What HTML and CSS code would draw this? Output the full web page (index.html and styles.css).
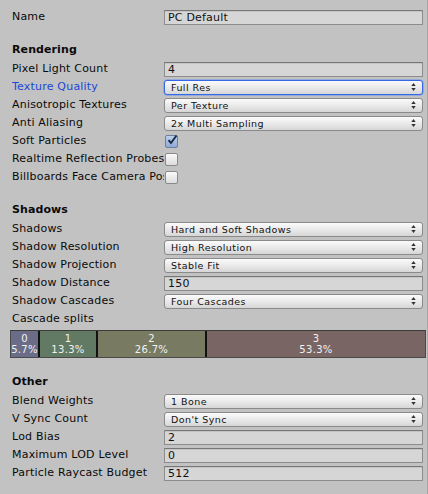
FILE: index.html
```html
<!DOCTYPE html>
<html>
<head>
<meta charset="utf-8">
<link rel="stylesheet" href="styles.css">
</head>
<body>
<div class="inspector">
  <div class="row">
    <div class="label">Name</div>
    <div class="field">PC Default</div>
  </div>

  <div class="header">Rendering</div>
  <div class="row"><div class="label">Pixel Light Count</div><div class="field">4</div></div>
  <div class="row"><div class="label focus-label">Texture Quality</div><div class="popup focused"><span>Full Res</span><svg class="arr" viewBox="0 0 5 9"><path d="M2.5 0L5 3.5H0Z M2.5 9L5 5.5H0Z"/></svg></div></div>
  <div class="row"><div class="label">Anisotropic Textures</div><div class="popup"><span>Per Texture</span><svg class="arr" viewBox="0 0 5 9"><path d="M2.5 0L5 3.5H0Z M2.5 9L5 5.5H0Z"/></svg></div></div>
  <div class="row"><div class="label">Anti Aliasing</div><div class="popup"><span>2x Multi Sampling</span><svg class="arr" viewBox="0 0 5 9"><path d="M2.5 0L5 3.5H0Z M2.5 9L5 5.5H0Z"/></svg></div></div>
  <div class="row"><div class="label">Soft Particles</div><div class="check on"><svg viewBox="0 0 12 12"><path d="M2.5 6.2L5 9L10.5 1.5" fill="none" stroke="#1d2b44" stroke-width="2"/></svg></div></div>
  <div class="row"><div class="label">Realtime Reflection Probes</div><div class="check"></div></div>
  <div class="row"><div class="label">Billboards Face Camera Position</div><div class="check"></div></div>

  <div class="header">Shadows</div>
  <div class="row"><div class="label">Shadows</div><div class="popup"><span>Hard and Soft Shadows</span><svg class="arr" viewBox="0 0 5 9"><path d="M2.5 0L5 3.5H0Z M2.5 9L5 5.5H0Z"/></svg></div></div>
  <div class="row"><div class="label">Shadow Resolution</div><div class="popup"><span>High Resolution</span><svg class="arr" viewBox="0 0 5 9"><path d="M2.5 0L5 3.5H0Z M2.5 9L5 5.5H0Z"/></svg></div></div>
  <div class="row"><div class="label">Shadow Projection</div><div class="popup"><span>Stable Fit</span><svg class="arr" viewBox="0 0 5 9"><path d="M2.5 0L5 3.5H0Z M2.5 9L5 5.5H0Z"/></svg></div></div>
  <div class="row"><div class="label">Shadow Distance</div><div class="field">150</div></div>
  <div class="row"><div class="label">Shadow Cascades</div><div class="popup"><span>Four Cascades</span><svg class="arr" viewBox="0 0 5 9"><path d="M2.5 0L5 3.5H0Z M2.5 9L5 5.5H0Z"/></svg></div></div>
  <div class="row"><div class="label">Cascade splits</div></div>
  <div class="cascades">
    <div class="seg c0"><span>0</span><span>5.7%</span></div>
    <div class="seg c1"><span>1</span><span>13.3%</span></div>
    <div class="seg c2"><span>2</span><span>26.7%</span></div>
    <div class="seg c3"><span>3</span><span>53.3%</span></div>
  </div>

  <div class="header other">Other</div>
  <div class="row"><div class="label">Blend Weights</div><div class="popup"><span>1 Bone</span><svg class="arr" viewBox="0 0 5 9"><path d="M2.5 0L5 3.5H0Z M2.5 9L5 5.5H0Z"/></svg></div></div>
  <div class="row"><div class="label">V Sync Count</div><div class="popup"><span>Don't Sync</span><svg class="arr" viewBox="0 0 5 9"><path d="M2.5 0L5 3.5H0Z M2.5 9L5 5.5H0Z"/></svg></div></div>
  <div class="row"><div class="label">Lod Bias</div><div class="field">2</div></div>
  <div class="row"><div class="label">Maximum LOD Level</div><div class="field">0</div></div>
  <div class="row"><div class="label">Particle Raycast Budget</div><div class="field">512</div></div>
</div>
</body>
</html>
```

FILE: styles.css
```css
html, body {
  margin: 0;
  padding: 0;
  background: #c2c2c2;
}
body {
  width: 428px;
  height: 494px;
  overflow: hidden;
  font-family: "DejaVu Sans", Verdana, sans-serif;
  font-size: 11px;
  color: #0a0a0a;
}
.inspector {
  display: flex;
  flex-direction: column;
  padding: 9px 4px 0 12px;
  border-right: 1px solid #a8a8a8;
  height: 485px;
  width: 411px;
}
.row {
  display: grid;
  grid-template-columns: 152px 1fr;
  height: 16px;
  margin-bottom: 2px;
  align-items: center;
  flex: none;
}
.label {
  white-space: nowrap;
  overflow: hidden;
  line-height: 16px;
  height: 16px;
  letter-spacing: 0.2px;
}
.focus-label {
  color: #1848d8;
}
.header {
  font-weight: bold;
  height: 17px;
  line-height: 16px;
  margin-top: 14px;
  margin-bottom: 2px;
  letter-spacing: 0.1px;
  flex: none;
}
.row + .header {
  margin-top: 15px;
}
.field {
  height: 13px;
  line-height: 13px;
  border: 1px solid #8c8c8c;
  border-top-color: #777;
  background: #d6d6d6;
  padding: 0 3px;
  box-shadow: inset 0 1px 0 #c4c4c4;
  color: #111;
  letter-spacing: 0.2px;
}
.popup {
  height: 13px;
  border: 1px solid #8a8a8a;
  border-radius: 3px;
  background: linear-gradient(#fbfbfb, #e6e6e6 60%, #d6d6d6);
  display: flex;
  align-items: center;
  justify-content: space-between;
  padding: 0 6px 0 6px;
  font-size: 9.5px;
  letter-spacing: 0.45px;
  color: #111;
}
.popup.focused {
  border-color: #3568e6;
  box-shadow: 0 0 0 0.5px #6a90ef;
}
.arr {
  width: 5px;
  height: 8px;
  fill: #333;
  flex: none;
}
.check {
  width: 11px;
  height: 11px;
  border: 1px solid #8a8a8a;
  border-radius: 2px;
  background: linear-gradient(#fafafa, #dcdcdc);
  margin-left: 1px;
  position: relative;
}
.check.on {
  background: linear-gradient(#bcd0ee, #8fa9d6);
  border-color: #6c7f9e;
}
.check svg {
  position: absolute;
  left: 0;
  top: -2px;
  width: 12px;
  height: 12px;
}
.cascades {
  display: flex;
  flex: none;
  margin: 1px 0 0 -2px;
  height: 26px;
  width: 414px;
  border: 1px solid #4a4a4a;
  border-top-color: #3c3c3c;
  background: #111;
  gap: 2px;
}
.seg {
  display: flex;
  flex-direction: column;
  align-items: center;
  justify-content: center;
  color: #f2f2f2;
  font-size: 10px;
  line-height: 11px;
  overflow: hidden;
  white-space: nowrap;
  letter-spacing: 0.3px;
}
.c0 { width: 27px; background: #6b6c88; }
.c1 { width: 56px; background: #627a64; }
.c2 { width: 107px; background: #787a62; }
.c3 { flex: 1; background: #7a6565; }
.header.other {
  margin-top: 16px;
}
```
